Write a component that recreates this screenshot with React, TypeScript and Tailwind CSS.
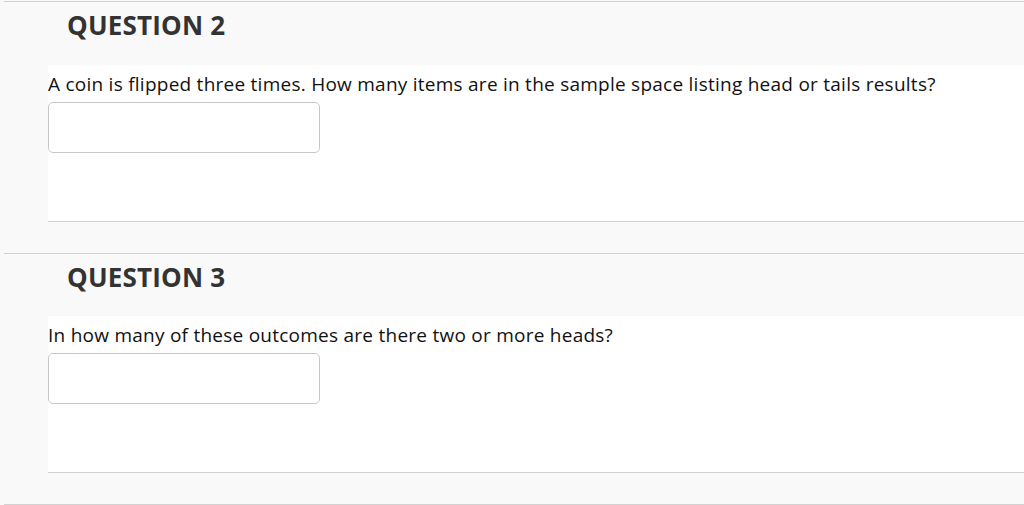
type Question = {
  number: number;
  text: string;
};

const questions: Question[] = [
  {
    number: 2,
    text: "A coin is flipped three times. How many items are in the sample space listing head or tails results?",
  },
  {
    number: 3,
    text: "In how many of these outcomes are there two or more heads?",
  },
];

function QuestionBlock({ q, last }: { q: Question; last: boolean }) {
  return (
    <div className="border-t border-[#d2d2d2] ml-1">
      <div className={last ? "h-[62px] pl-[63px] pt-[8px]" : "h-[63px] pl-[63px] pt-[8px]"}>
        <h3 className="text-[26px] leading-[30px] font-bold text-[#333] tracking-[0.2px]">QUESTION {q.number}</h3>
      </div>
      <div className="ml-[44px] bg-white h-[157px] border-b border-[#d2d2d2]">
        <p className="text-[19px] leading-[24px] text-[#111] pt-[7px] tracking-[0.25px]">{q.text}</p>
        <input
          type="text"
          className="mt-[6px] block w-[272px] h-[51px] rounded-[5px] border border-[#c8c8c8] bg-white outline-none"
        />
      </div>
      <div className="h-[31px]" />
    </div>
  );
}

export default function App() {
  return (
    <div className="min-h-[505px] bg-[#f9f9f9] pt-px font-['Open_Sans',sans-serif]">
      {questions.map((q, i) => (
        <QuestionBlock key={q.number} q={q} last={i === questions.length - 1} />
      ))}
      <div className="border-t border-[#d2d2d2] ml-1" />
    </div>
  );
}
